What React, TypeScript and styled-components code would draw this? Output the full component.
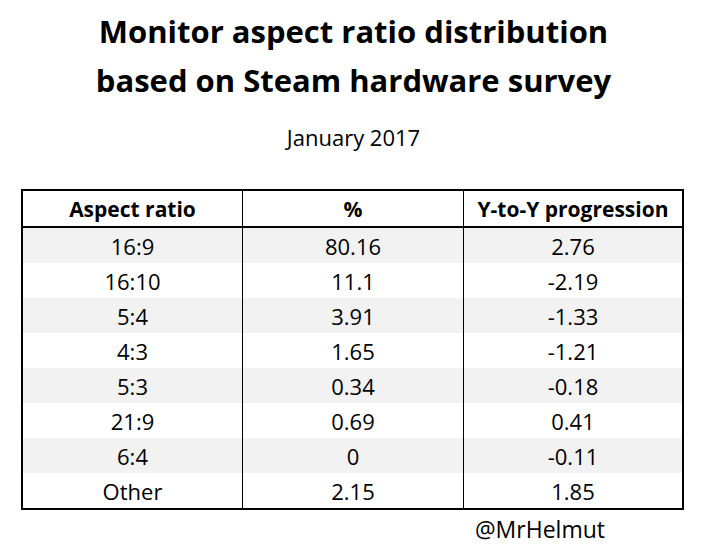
import styled, { createGlobalStyle } from 'styled-components';

const GlobalStyle = createGlobalStyle`
  html, body {
    margin: 0;
    padding: 0;
    background: #fff;
  }
  body {
    font-family: "Open Sans", "Noto Sans", "Liberation Sans", sans-serif;
    color: #000;
  }
`;

const Page = styled.div`
  width: 707px;
  height: 554px;
  padding-top: 7px;
  box-sizing: border-box;
  display: flex;
  flex-direction: column;
`;

const Title = styled.h1`
  margin: 0;
  text-align: center;
  font-size: 31px;
  line-height: 49px;
  font-weight: 700;
`;

const Subtitle = styled.div`
  margin-top: 19px;
  text-align: center;
  font-size: 22px;
  line-height: 26px;
`;

const Table = styled.div`
  margin: 39px 0 0 21px;
  width: 663px;
  border: 2px solid #000;
  box-sizing: border-box;
`;

const Row = styled.div<{ $head?: boolean; $shade?: boolean }>`
  display: grid;
  grid-template-columns: 219px 221px 219px;
  height: 35px;
  background: ${(p) => (p.$shade ? '#f2f2f2' : '#fff')};
  border-bottom: ${(p) => (p.$head ? '2px solid #000' : 'none')};
`;

const Cell = styled.div<{ $head?: boolean }>`
  display: flex;
  align-items: center;
  justify-content: center;
  font-size: ${(p) => (p.$head ? '21px' : '22px')};
  font-weight: ${(p) => (p.$head ? 700 : 400)};
  & + & {
    border-left: 1px solid #000;
  }
`;

const Credit = styled.div`
  margin: 6px 0 0 475px;
  font-size: 23px;
  line-height: 26px;
`;

const rows: [string, string, string][] = [
  ['16:9', '80.16', '2.76'],
  ['16:10', '11.1', '-2.19'],
  ['5:4', '3.91', '-1.33'],
  ['4:3', '1.65', '-1.21'],
  ['5:3', '0.34', '-0.18'],
  ['21:9', '0.69', '0.41'],
  ['6:4', '0', '-0.11'],
  ['Other', '2.15', '1.85'],
];

export default function App() {
  return (
    <>
      <GlobalStyle />
      <Page>
        <Title>
          Monitor aspect ratio distribution
          <br />
          based on Steam hardware survey
        </Title>
        <Subtitle>January 2017</Subtitle>
        <Table>
          <Row $head>
            <Cell $head>Aspect ratio</Cell>
            <Cell $head>%</Cell>
            <Cell $head>Y-to-Y progression</Cell>
          </Row>
          {rows.map((r, i) => (
            <Row key={r[0]} $shade={i % 2 === 0}>
              {r.map((v, j) => (
                <Cell key={j}>{v}</Cell>
              ))}
            </Row>
          ))}
        </Table>
        <Credit>@MrHelmut</Credit>
      </Page>
    </>
  );
}
